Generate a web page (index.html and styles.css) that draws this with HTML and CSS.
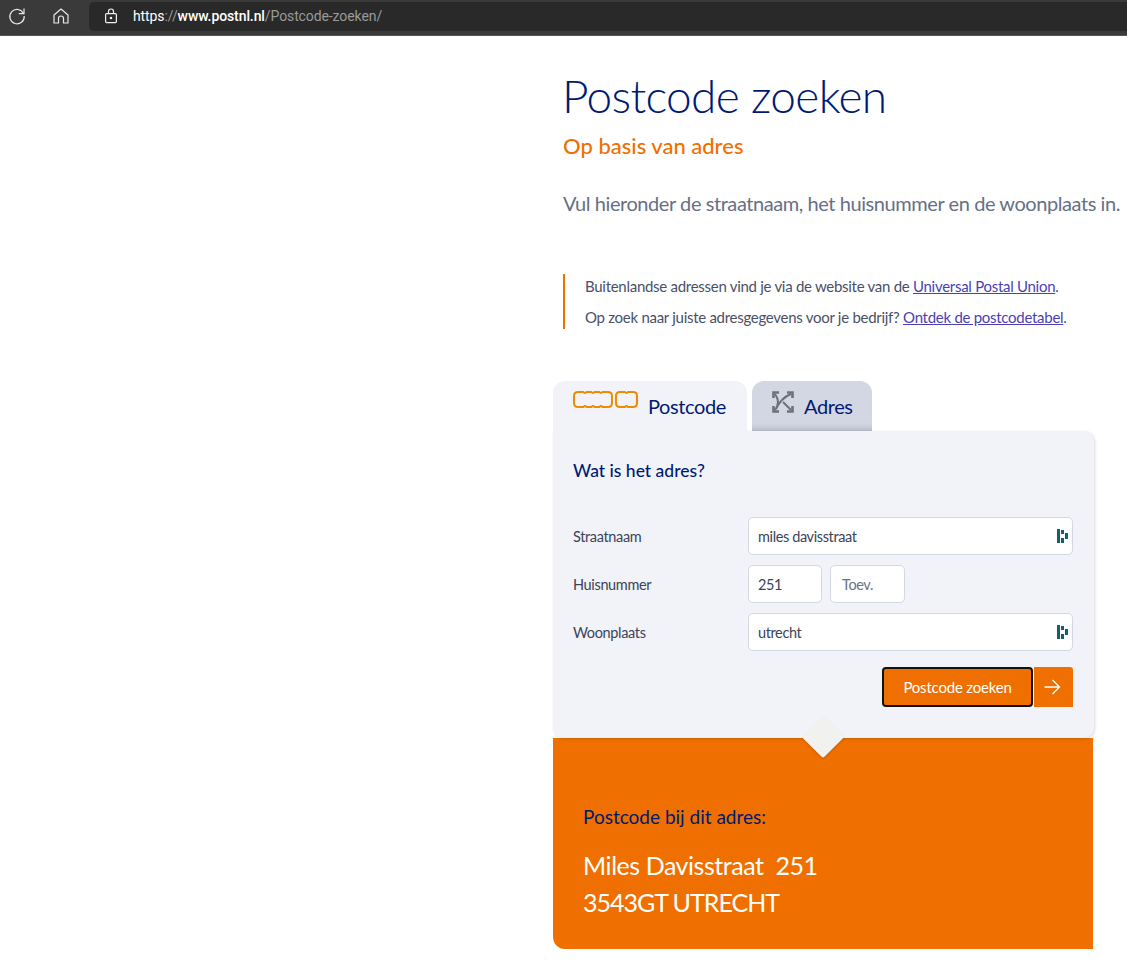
FILE: index.html
```html
<!DOCTYPE html>
<html lang="nl">
<head>
    <meta charset="UTF-8">
    <meta name="viewport" content="width=device-width, initial-scale=1.0">
    <title>Postcode zoeken</title>
    <link rel="stylesheet" href="styles.css">
</head>
<body>

<header class="browser-bar">
    <svg class="bar-icon reload" width="20" height="20" viewBox="0 0 20 20" fill="none" stroke="#e8e8e8" stroke-width="1.2">
        <path d="M16.5 7.5A7.2 7.2 0 1 0 17.2 10"/>
        <path d="M17 2.5v5.2h-5.2"/>
    </svg>
    <svg class="bar-icon home" width="18" height="18" viewBox="0 0 18 18" fill="none" stroke="#e8e8e8" stroke-width="1.2">
        <path d="M2 8 9 2l7 6v8h-4.500v-4.500a2.500 2.500 0 0 0-5 0V16H2z" stroke-linejoin="round"/>
    </svg>
    <div class="address-field">
        <svg width="14" height="16" viewBox="0 0 14 16" fill="none" stroke="#f0f0f0" stroke-width="1.2">
            <rect x="1.600" y="5.600" width="10.800" height="9" rx="1"/>
            <path d="M4.500 5.500V3.500a2.500 2.500 0 0 1 5 0v2"/>
            <circle cx="7" cy="10" r=".7" fill="#f0f0f0"/>
        </svg>
        <span class="url"><span class="url-scheme">https</span><span class="url-dim">://</span><b>www.postnl.nl</b><span class="url-dim">/Postcode-zoeken/</span></span>
    </div>
</header>

<main class="page">
    <h1>Postcode zoeken</h1>
    <h2>Op basis van adres</h2>
    <p class="intro">Vul hieronder de straatnaam, het huisnummer en de woonplaats in.</p>

    <div class="note">
        <p>Buitenlandse adressen vind je via de website van de <a href="#">Universal Postal Union</a>.</p>
        <p>Op zoek naar juiste adresgegevens voor je bedrijf? <a href="#">Ontdek de postcodetabel</a>.</p>
    </div>

    <div class="finder">
        <div class="tabs">
            <div class="tab active">
                <svg width="65" height="18" viewBox="0 0 65 18" fill="none" stroke="#ee8c00" stroke-width="2">
                    <path d="M5 1H10.500Q12 3 13.500 1H18.500Q20 3 21.500 1H26.500Q28 3 29.500 1H35Q39 1 39 5V12Q39 16 35 16H29.500Q28 14 26.500 16H21.500Q20 14 18.500 16H13.500Q12 14 10.500 16H5Q1 16 1 12V5Q1 1 5 1Z"/>
                    <path d="M47 1H52Q53.500 3 55 1H60Q64 1 64 5V12Q64 16 60 16H55Q53.500 14 52 16H47Q43 16 43 12V5Q43 1 47 1Z"/>
                </svg>
                <span>Postcode</span>
            </div>
            <div class="tab">
                <svg width="24" height="24" viewBox="0 0 24 24" fill="none" stroke="#6e7278" stroke-width="2.600">
                    <path d="M2.500 8V2.500H8M16 2.500h5.500V8M21.500 16v5.500H16M8 21.500H2.500V16"/>
                    <path d="M4 4Q10 12 4 20M5 19Q10 8 20 4M12 12Q15 15 20 20" stroke-width="2"/>
                </svg>
                <span>Adres</span>
            </div>
        </div>

        <form class="panel">
            <h3>Wat is het adres?</h3>
            <div class="form-row">
                <label>Straatnaam</label>
                <div class="field wide"><span>miles davisstraat</span><i class="field-mark"><b></b><b></b><b></b></i></div>
            </div>
            <div class="form-row">
                <label>Huisnummer</label>
                <div class="field small"><span>251</span></div>
                <div class="field small placeholder"><span>Toev.</span></div>
            </div>
            <div class="form-row">
                <label>Woonplaats</label>
                <div class="field wide"><span>utrecht</span><i class="field-mark"><b></b><b></b><b></b></i></div>
            </div>
            <div class="actions">
                <button type="button" class="btn-search">Postcode zoeken</button>
                <span class="btn-arrow">
                    <svg width="18" height="18" viewBox="0 0 18 18" fill="none" stroke="#fff" stroke-width="1.300">
                        <path d="M1.500 9h15M9.500 2l7 7-7 7"/>
                    </svg>
                </span>
            </div>
            <div class="diamond"></div>
        </form>

        <section class="result">
            <h4>Postcode bij dit adres:</h4>
            <p>Miles Davisstraat&nbsp; 251<br><span class="result-code">3543GT UTRECHT</span></p>
        </section>
    </div>
</main>

</body>
</html>
```

FILE: styles.css
```css
body {
    font-family: "Lato", "Noto Sans", sans-serif;
    background-color: #fff;
    margin: 0;
    padding: 0;
    color: #001a73;
}
.browser-bar {
    display: flex;
    align-items: center;
    height: 36px;
    box-sizing: border-box;
    padding: 0 0 3px 7px;
    background-color: #3a3a3a;
    border-bottom: 1px solid #555;
}
.bar-icon.reload {
    margin-right: 25px;
}
.bar-icon.home {
    margin-right: 19px;
}
.address-field {
    flex: 1;
    display: flex;
    align-items: center;
    height: 29px;
    padding-left: 15px;
    background-color: #292929;
    border-radius: 5px 0 0 5px;
}
.url {
    margin-left: 15px;
    font-family: "Roboto", sans-serif;
    font-size: 14px;
    letter-spacing: -.1px;
    color: #fff;
}
.url b {
    font-weight: 500;
}
.url-dim {
    color: #9a9a9a;
}
.page {
    padding-left: 553px;
    width: 541px;
}
h1 {
    margin: 32px 0 0 9px;
    font-size: 46px;
    font-weight: 300;
    line-height: 56px;
    letter-spacing: -.65px;
    white-space: nowrap;
}
h2 {
    margin: 7px 0 0 10px;
    font-size: 22px;
    font-weight: 500;
    line-height: 30px;
    color: #ef7000;
}
.intro {
    margin: 27px 0 0 10px;
    font-size: 20px;
    line-height: 30px;
    letter-spacing: -.43px;
    color: #667085;
    white-space: nowrap;
}
.note {
    margin: 56px 0 0 10px;
    padding-left: 20px;
    border-left: 2px solid #ef7000;
    height: 55px;
    font-size: 15px;
    letter-spacing: -.28px;
    color: #4a5068;
    white-space: nowrap;
}
.note p {
    margin: 0 0 7px;
    line-height: 24px;
}
.note a {
    color: #4a3fb5;
}
.finder {
    margin-top: 52px;
    position: relative;
}
.tabs {
    display: flex;
    gap: 5px;
    height: 50px;
}
.tab {
    display: flex;
    align-items: center;
    gap: 9px;
    box-sizing: border-box;
    width: 120px;
    padding: 0 0 0 19px;
    border-radius: 12px 12px 0 0;
    background-color: #d3d7e3;
    box-shadow: inset 0 -8px 8px -8px #9a9eaa;
    font-size: 20px;
    letter-spacing: -.4px;
    color: #001a73;
}
.tab svg {
    margin-top: -8px;
}
.tab span {
    margin-bottom: 1px;
}
.tab.active {
    position: relative;
    z-index: 2;
    width: 194px;
    padding-left: 20px;
    gap: 10px;
    background-color: #f2f3f8;
    box-shadow: none;
}
.tab.active svg {
    margin-top: -12px;
}
.panel {
    position: relative;
    z-index: 1;
    box-sizing: border-box;
    height: 307px;
    padding: 28px 21px 0 20px;
    background-color: #f2f3f8;
    border-radius: 0 10px 10px 10px;
    box-shadow: 1px 1px 3px rgba(0, 0, 0, .15);
}
h3 {
    margin: 0 0 34px;
    font-size: 17.500px;
    font-weight: 500;
    line-height: 24px;
}
.form-row {
    display: flex;
    align-items: center;
    gap: 8px;
    height: 38px;
    margin-bottom: 10px;
}
.form-row label {
    width: 167px;
    font-size: 14.500px;
    letter-spacing: -.35px;
    color: #3c4359;
}
.field {
    display: flex;
    align-items: center;
    justify-content: space-between;
    box-sizing: border-box;
    height: 38px;
    padding: 0 4px 0 9px;
    background-color: #fff;
    border: 1px solid #d3d7e3;
    border-radius: 5px;
    font-size: 14.500px;
    letter-spacing: -.38px;
    color: #3c4359;
}
.field.wide {
    width: 325px;
}
.field.small {
    width: 74px;
}
.field.small + .field.small {
    width: 75px;
    padding-left: 11px;
}
.placeholder {
    color: #6b7285;
}
.field-mark {
    display: flex;
    gap: 1px;
    align-items: center;
}
.field-mark b {
    display: block;
    width: 3px;
    height: 14px;
    background-color: #14606e;
}
.field-mark b:nth-child(2) {
    height: 13px;
    background: linear-gradient(#14606e 0 4px, transparent 4px 8px, #14606e 8px);
}
.field-mark b:nth-child(3) {
    height: 6px;
}
.actions {
    display: flex;
    justify-content: flex-end;
    gap: 1px;
    margin-top: 16px;
}
.btn-search {
    box-sizing: border-box;
    width: 151px;
    height: 40px;
    background-color: #ef7000;
    border: 2px solid #111;
    border-radius: 4px;
    font-family: "Lato", sans-serif;
    font-size: 15px;
    letter-spacing: -.2px;
    color: #fff;
}
.btn-arrow {
    display: flex;
    align-items: center;
    justify-content: center;
    box-sizing: border-box;
    width: 39px;
    height: 40px;
    padding-right: 4px;
    background-color: #ef7000;
    border-radius: 0 3px 0 0;
}
.diamond {
    position: absolute;
    left: 255px;
    bottom: -14px;
    width: 30px;
    height: 30px;
    transform: rotate(45deg);
    background-color: #f1f2ef;
    box-shadow: 1px 1px 2px rgba(0, 0, 0, .15);
    border-radius: 2px;
}
.result {
    box-sizing: border-box;
    width: 540px;
    height: 211px;
    padding: 64px 30px 0;
    background-color: #ef7000;
    border-radius: 0 0 0 12px;
}
h4 {
    margin: 0 0 15px;
    font-size: 19px;
    font-weight: 400;
    line-height: 30px;
}
.result p {
    margin: 0;
    font-size: 25px;
    line-height: 37px;
    letter-spacing: -.45px;
    color: #fff;
}
.result-code {
    letter-spacing: -1px;
}
```
